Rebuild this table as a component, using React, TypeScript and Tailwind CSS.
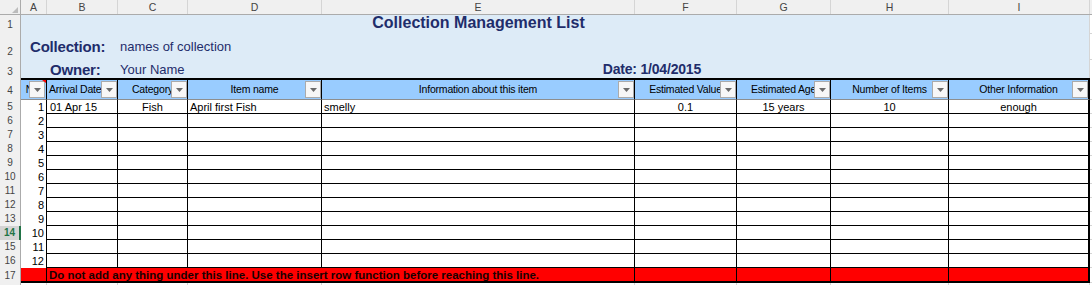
import React from "react";

// column widths: row header, A..I, J
const cols =
  "grid grid-cols-[21px_26px_71px_70px_134px_313px_102px_94px_118px_141px_1fr]";

const letters = ["A", "B", "C", "D", "E", "F", "G", "H", "I"];

const headers = [
  { t: "No.", left: false },
  { t: "Arrival Date", left: true },
  { t: "Category", left: false },
  { t: "Item name", left: false },
  { t: "Information about this item", left: false },
  { t: "Estimated Value", left: false },
  { t: "Estimated Age", left: false },
  { t: "Number of Items", left: false },
  { t: "Other Information", left: false },
];

const firstRow = [
  { t: "01 Apr 15", left: true },
  { t: "Fish", left: false },
  { t: "April first Fish", left: true },
  { t: "smelly", left: true },
  { t: "0.1", left: false },
  { t: "15 years", left: false },
  { t: "10", left: false },
  { t: "enough", left: false },
];

function RowHead({
  n,
  className = "items-center",
  active = false,
}: {
  n?: number;
  className?: string;
  active?: boolean;
}) {
  return (
    <div
      className={`flex justify-center text-[10px] leading-none ${className} ${
        active
          ? "bg-[#d4d4d4] font-bold text-[#217346] border-r-2 border-[#217346]"
          : "bg-[#f0f0f0] text-[#444] border-r border-[#ababab]"
      }`}
    >
      {n}
    </div>
  );
}

function FilterButton({ className = "right-0" }: { className?: string }) {
  return (
    <span
      className={`absolute top-[1px] flex h-[17px] w-[16px] items-center justify-center border border-[#ababab] bg-[#f7f7f7] ${className}`}
    >
      <svg width="7" height="4" viewBox="0 0 7 4">
        <path d="M0 0H7L3.5 4Z" fill="#6b6b6b" />
      </svg>
    </span>
  );
}

export default function App() {
  return (
    <div className="h-[285px] w-[1092px] overflow-hidden bg-white font-['Liberation_Sans',Arial,sans-serif] text-black">
      {/* column letters */}
      <div className={`${cols} h-[15px] border-b border-[#ababab] bg-[#f0f0f0]`}>
        <div className="relative border-r border-[#ababab]">
          <svg className="absolute bottom-[1px] right-[2px]" width="6" height="6" viewBox="0 0 6 6">
            <path d="M6 0V6H0Z" fill="#bcbcbc" />
          </svg>
        </div>
        {letters.map((l) => (
          <div
            key={l}
            className="flex items-center justify-center border-r border-[#d5d5d5] text-[10.5px] leading-none text-[#444]"
          >
            {l}
          </div>
        ))}
        <div />
      </div>

      {/* rows 1-3: title block */}
      <div className="flex h-[63px]">
        <div className="flex w-[21px] flex-col">
          <RowHead n={1} className="h-[19px] items-end pb-[4px]" />
          <RowHead n={2} className="h-[26px] items-end pb-[3px]" />
          <RowHead n={3} className="h-[18px] items-end pb-[1px]" />
        </div>
        <div className="grid w-[1068px] grid-cols-[26px_71px_70px_134px_313px_102px_94px_118px_140px] grid-rows-[19px_26px_18px] bg-[#ddebf7] text-[#1f2d6b] whitespace-nowrap">
          <div className="col-start-5 row-start-1 text-center text-[16px] font-bold leading-none">
            Collection Management List
          </div>
          <div className="col-start-1 row-start-2 pl-[9px] pt-[5px] text-[15px] font-bold leading-none tracking-[-0.2px]">
            Collection:
          </div>
          <div className="col-start-3 row-start-2 pl-[2px] pt-[6px] text-[13px] leading-none">
            names of collection
          </div>
          <div className="col-start-2 row-start-3 pl-[3px] pt-[2px] text-[15px] font-bold leading-none tracking-[-0.2px]">
            Owner:
          </div>
          <div className="col-start-3 row-start-3 pl-[2px] pt-[3px] text-[13px] leading-none">
            Your Name
          </div>
          <div className="col-span-2 col-start-5 row-start-3 flex justify-end pr-[36px] pt-[2px] text-[14px] font-bold leading-none tracking-[-0.2px]">
            Date: 1/04/2015
          </div>
        </div>
        <div className="flex flex-1 flex-col border-l border-[#d5d5d5]">
          <div className="h-[19px] border-b border-[#d5d5d5]" />
          <div className="h-[26px] border-b border-[#d5d5d5]" />
          <div className="h-[18px]" />
        </div>
      </div>

      {/* row 4: table header */}
      <div className={`${cols} h-[22px]`}>
        <RowHead n={4} className="items-end pb-[4px]" />
        {headers.map((h, i) => (
          <div
            key={h.t}
            className={`relative flex items-center overflow-hidden whitespace-nowrap border-t-2 border-b border-t-black border-b-[#8e8e8e] border-r-black bg-[#99ccff] text-[10.5px] leading-none tracking-[-0.2px] ${
              i === 8 ? "border-r-2" : "border-r"
            } ${h.left ? "justify-start pl-[2px]" : "justify-center"}`}
          >
            <span>{h.t}</span>
            <FilterButton className={i === 0 ? "right-[1px]" : "right-0"} />
            {i === 0 && (
              <svg className="absolute right-0 top-0" width="4" height="3" viewBox="0 0 4 3">
                <path d="M0 0H4V3Z" fill="#ff0000" />
              </svg>
            )}
          </div>
        ))}
        <div className="border-b border-[#d5d5d5]" />
      </div>

      {/* rows 5-16 */}
      {Array.from({ length: 12 }).map((_, r) => (
        <div key={r} className={`${cols} h-[14px]`}>
          <RowHead n={r + 5} active={r + 5 === 14} />
          <div className="flex items-end justify-end border-r border-black pb-[1px] pr-[2px] text-[11px] leading-none">
            {r + 1}
          </div>
          {Array.from({ length: 8 }).map((_, c) => {
            const cell = r === 0 ? firstRow[c] : null;
            return (
              <div
                key={c}
                className={`flex items-end overflow-hidden whitespace-nowrap border-b border-black text-[11px] leading-none ${
                  c === 7 ? "border-r-2" : "border-r"
                } ${cell && cell.left ? (c === 0 ? "pl-[3px]" : "pl-[2px]") : "justify-center"}`}
              >
                {cell ? cell.t : null}
              </div>
            );
          })}
          <div className="border-b border-[#d5d5d5]" />
        </div>
      ))}

      {/* row 17: warning line */}
      <div className={`${cols} h-[15px]`}>
        <RowHead n={17} />
        <div className="border-r border-b-2 border-black bg-[#ff0000]" />
        <div className="col-span-4 flex items-end whitespace-nowrap border-r border-b-2 border-black bg-[#ff0000] pl-[2px] text-[11.5px] font-bold leading-none text-[#1a0000]">
          Do not add any thing under this line. Use the insert row function before reaching this line.
        </div>
        <div className="border-r border-b-2 border-black bg-[#ff0000]" />
        <div className="border-r border-b-2 border-black bg-[#ff0000]" />
        <div className="border-r border-b-2 border-black bg-[#ff0000]" />
        <div className="border-r-2 border-b-2 border-black bg-[#ff0000]" />
        <div className="border-b border-[#d5d5d5]" />
      </div>

      {/* row 18 (only a sliver visible) */}
      <div className={`${cols} h-[14px]`}>
        <RowHead />
        {letters.map((l) => (
          <div key={l} className="border-r border-[#d5d5d5]" />
        ))}
        <div />
      </div>
    </div>
  );
}
